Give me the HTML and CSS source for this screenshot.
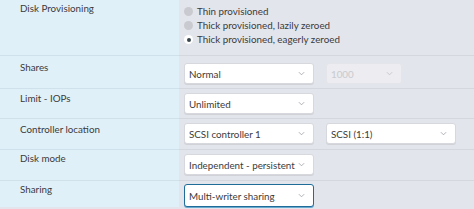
FILE: index.html
```html
<!DOCTYPE html>
<html>
<head>
<meta charset="utf-8">
<link rel="stylesheet" href="styles.css">
</head>
<body>
<div class="form">
  <div class="row r1">
    <div class="label">Disk Provisioning</div>
    <div class="field">
      <div class="radios">
        <div class="radio"><span class="dot off"></span>Thin provisioned</div>
        <div class="radio"><span class="dot off"></span>Thick provisioned, lazily zeroed</div>
        <div class="radio"><span class="dot on"></span>Thick provisioned, eagerly zeroed</div>
      </div>
    </div>
  </div>
  <div class="row r2">
    <div class="label">Shares</div>
    <div class="field">
      <div class="select">Normal<svg class="chev" viewBox="0 0 8 5"><path d="M1 1l3 3 3-3"/></svg></div>
      <div class="select small disabled">1000<svg class="chev" viewBox="0 0 8 5"><path d="M1 1l3 3 3-3"/></svg></div>
    </div>
  </div>
  <div class="row r3">
    <div class="label">Limit - IOPs</div>
    <div class="field">
      <div class="select">Unlimited<svg class="chev" viewBox="0 0 8 5"><path d="M1 1l3 3 3-3"/></svg></div>
    </div>
  </div>
  <div class="row r4">
    <div class="label">Controller location</div>
    <div class="field">
      <div class="select">SCSI controller 1<svg class="chev" viewBox="0 0 8 5"><path d="M1 1l3 3 3-3"/></svg></div>
      <div class="select">SCSI (1:1)<svg class="chev" viewBox="0 0 8 5"><path d="M1 1l3 3 3-3"/></svg></div>
    </div>
  </div>
  <div class="row r5">
    <div class="label">Disk mode</div>
    <div class="field">
      <div class="select">Independent - persistent<svg class="chev" viewBox="0 0 8 5"><path d="M1 1l3 3 3-3"/></svg></div>
    </div>
  </div>
  <div class="row r6">
    <div class="label">Sharing</div>
    <div class="field">
      <div class="select focus">Multi-writer sharing<svg class="chev" viewBox="0 0 8 5"><path d="M1 1l3 3 3-3"/></svg></div>
    </div>
  </div>
</div>
</body>
</html>
```
FILE: styles.css
```css
html, body {
  margin: 0;
  padding: 0;
}
body {
  width: 474px;
  height: 209px;
  overflow: hidden;
  background: #e3e5ec;
  font-family: "Lato", "Open Sans", sans-serif;
  font-size: 9.8px;
  color: #3b3b3b;
}
.form {
  display: flex;
  flex-direction: column;
}
.row {
  display: grid;
  grid-template-columns: 179px 1fr;
}
.label {
  background: #e0f0f9;
  padding-left: 20px;
  border-bottom: 1px solid #cfe2ec;
  line-height: 14px;
}
.field {
  border-bottom: 1px solid #d5d7de;
  padding-left: 5px;
  display: flex;
  gap: 12px;
  align-items: flex-start;
}
.r1 { height: 56px; }
.r1 .label { padding-top: 1px; }
.r1 .field { padding-top: 5px; }
.r2 { height: 33px; }
.r2 .label { padding-top: 4px; }
.r2 .field { padding-top: 7px; }
.r3 { height: 30px; }
.r3 .label { padding-top: 2px; }
.r3 .field { padding-top: 4px; }
.r4 { height: 31px; }
.r4 .label { padding-top: 3px; }
.r4 .field { padding-top: 4px; }
.r5 { height: 31px; }
.r5 .label { padding-top: 1px; }
.r5 .field { padding-top: 4px; }
.r6 { flex: 1; height: 28px; }
.r6 .label { border-bottom: none; padding-top: 1px; }
.r6 .field { border-bottom: none; padding-top: 3px; }

.radios {
  display: flex;
  flex-direction: column;
  gap: 1px;
}
.radio {
  display: flex;
  align-items: center;
  gap: 4px;
  height: 13px;
  line-height: 13px;
}
.dot {
  width: 9px;
  height: 9px;
  border-radius: 50%;
  box-sizing: border-box;
  flex: none;
  position: relative;
}
.dot.off {
  background: #c9cacf;
}
.dot.on {
  background: #ffffff;
}
.dot.on::after {
  content: "";
  position: absolute;
  left: 2.5px;
  top: 2.5px;
  width: 4px;
  height: 4px;
  border-radius: 50%;
  background: #3a464e;
}

.select {
  width: 130px;
  height: 21px;
  box-sizing: border-box;
  background: #ffffff;
  border: 1px solid #d6d8de;
  border-radius: 3px;
  display: flex;
  align-items: center;
  justify-content: space-between;
  padding: 0 8px 0 4px;
  white-space: nowrap;
  box-shadow: 0 1px 0 #d0d2d8;
}
.select.small {
  width: 76px;
}
.select.disabled {
  background: #ececf1;
  border-color: #e4e5ea;
  color: #c9cace;
  box-shadow: none;
}
.select.focus {
  border-color: #1f6c99;
  box-shadow: 0 1px 0 #6aa9cf;
  height: 23px;
}
.chev {
  width: 7px;
  height: 5px;
  flex: none;
}
.chev path {
  fill: none;
  stroke: #a4a6ab;
  stroke-width: 1;
}
.disabled .chev path {
  stroke: #c4c6cb;
}
```
